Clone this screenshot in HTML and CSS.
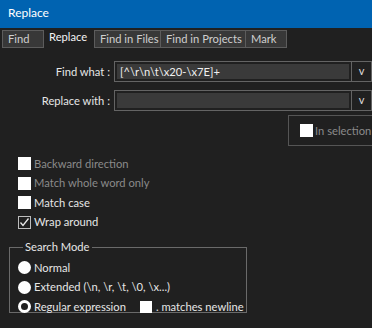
FILE: index.html
```html
<!DOCTYPE html>
<html>
<head>
<meta charset="utf-8">
<link rel="stylesheet" href="styles.css">
</head>
<body>
<div class="win">
  <div class="titlebar">Replace</div>
  <div class="tabs">
    <div class="tab t1">Find</div>
    <div class="tab sel">Replace</div>
    <div class="tab t3">Find in Files</div>
    <div class="tab t4">Find in Projects</div>
    <div class="tab t5">Mark</div>
  </div>
  <div class="field first">
    <div class="lbl">Find what :</div>
    <div class="combo"><div class="inp">[^\r\n\t\x20-\x7E]+</div><div class="drop">v</div></div>
  </div>
  <div class="field second">
    <div class="lbl">Replace with :</div>
    <div class="combo"><div class="inp"></div><div class="drop">v</div></div>
  </div>
  <div class="selbox"><span class="cb"></span><span class="dis">In selection</span></div>
  <div class="opts">
    <div class="opt"><span class="cb"></span><span class="dis">Backward direction</span></div>
    <div class="opt"><span class="cb"></span><span class="dis">Match whole word only</span></div>
    <div class="opt"><span class="cb"></span><span>Match case</span></div>
    <div class="opt"><span class="cb checked"><svg width="11" height="11" viewBox="0 0 11 11"><path d="M1.5 5.5 L4 8.5 L9.5 1.5" fill="none" stroke="#e8e8e8" stroke-width="1.3"/></svg></span><span>Wrap around</span></div>
  </div>
  <fieldset class="mode">
    <legend>Search Mode</legend>
    <div class="radio"><span class="rb"></span><span>Normal</span></div>
    <div class="radio"><span class="rb"></span><span>Extended (\n, \r, \t, \0, \x...)</span></div>
    <div class="radio"><span class="rb on"></span><span class="rx">Regular expression</span><span class="cb small"></span><span>. matches newline</span></div>
  </fieldset>
</div>
</body>
</html>
```
FILE: styles.css
```css
html, body {
  margin: 0;
  padding: 0;
  background: #202020;
}
.win {
  width: 372px;
  height: 328px;
  overflow: hidden;
  background: #202020;
  font-family: "Lato", "Liberation Sans", sans-serif;
  font-size: 11.2px;
  line-height: 14px;
  color: #e6e6e6;
  white-space: nowrap;
}
.titlebar {
  height: 28px;
  background: #0063b1;
  color: #ffffff;
  font-size: 12px;
  line-height: 26px;
  padding-left: 8px;
  box-sizing: border-box;
}
.tabs {
  display: flex;
  margin-top: 2px;
  padding-left: 2px;
  height: 18px;
}
.tab {
  box-sizing: border-box;
  height: 18px;
  border: 1px solid #5c5c5c;
  background: #383838;
  color: #cfcfcf;
  padding: 0 0 0 5px;
  line-height: 16px;
}
.t1 { width: 42px; }
.t3 { width: 67px; }
.t4 { width: 85px; }
.t5 { width: 41px; }
.tab + .tab { border-left: none; }
.tab.sel {
  width: 50px;
  background: transparent;
  border: none;
  color: #f4f4f4;
  padding: 0 0 0 5px;
  line-height: 13px;
}
.tab.sel + .tab { border-left: 1px solid #5c5c5c; }
.field {
  display: flex;
  align-items: center;
  height: 21px;
}
.field.first { margin-top: 13px; }
.field.second { margin-top: 8px; }
.lbl {
  width: 110px;
  text-align: right;
  padding-right: 4px;
  color: #e6e6e6;
}
.combo {
  display: flex;
  height: 21px;
  border: 1px solid #646464;
  box-sizing: border-box;
  width: 258px;
}
.inp {
  flex: 1;
  margin: 2px;
  background: #3a3a3a;
  color: #f0f0f0;
  line-height: 15px;
  padding-left: 3px;
}
.drop {
  width: 19px;
  border-left: 1px solid #646464;
  text-align: center;
  color: #dcdcdc;
  line-height: 18px;
  font-size: 11px;
}
.selbox {
  margin-top: 4px;
  margin-left: 288px;
  width: 100px;
  height: 31px;
  border: 1px solid #555555;
  box-sizing: border-box;
  display: flex;
  align-items: center;
  padding-left: 11px;
}
.cb {
  display: inline-block;
  width: 13px;
  height: 13px;
  background: #ffffff;
  box-sizing: border-box;
  margin-right: 3px;
  flex: none;
}
.selbox .cb { margin-right: 2px; }
.cb.checked {
  background: #202020;
  border: 1px solid #bdbdbd;
  display: inline-flex;
  align-items: center;
  justify-content: center;
}
.dis { color: #8a8a8a; }
.opts {
  margin-top: 8px;
  padding-left: 18px;
}
.opt {
  display: flex;
  align-items: center;
  height: 19.5px;
}
.mode {
  margin: 9px 0 0 9px;
  width: 238px;
  min-width: 0;
  height: 72px;
  box-sizing: border-box;
  border: 1px solid #6a6a6a;
  padding: 0 0 0 8px;
  overflow: visible;
}
.mode legend {
  padding: 0 2px;
  margin-left: 5px;
  color: #e6e6e6;
  line-height: 12px;
}
.radio {
  display: flex;
  align-items: center;
  height: 19.5px;
}
.radio:first-of-type { margin-top: 5px; }
.rb {
  width: 13px;
  height: 13px;
  border-radius: 50%;
  background: #ffffff;
  margin-right: 3px;
  box-sizing: border-box;
  flex: none;
}
.rb.on {
  background: #202020;
  border: 3px solid #ffffff;
}
.rx { margin-right: 14px; }
.cb.small { width: 12px; height: 12px; margin-right: 4px; }
```
